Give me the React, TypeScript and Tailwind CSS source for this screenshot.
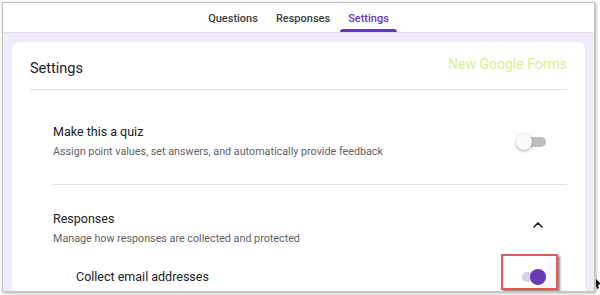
import { ChevronUp } from 'lucide-react';

type TabProps = { label: string; active?: boolean };

function Tab({ label, active }: TabProps) {
  return (
    <div
      className={`relative flex h-full items-center px-[8px] pt-[3px] text-[11px] font-medium ${
        active ? 'text-[#673ab7]' : 'text-[#3c4043]'
      }`}
    >
      {label}
      {active && <div className="absolute bottom-0 left-0 right-0 h-[3px] rounded-t-[3px] bg-[#673ab7]" />}
    </div>
  );
}

function Toggle({ on }: { on?: boolean }) {
  return (
    <div className="relative flex h-[16px] w-[30px] items-center">
      <div className={`ml-[6px] h-[10px] w-[24px] rounded-full ${on ? 'bg-[#d9cdf0]' : 'bg-[#bdbdbd]'}`} />
      <div
        className={`absolute top-0 h-[16px] w-[16px] rounded-full ${
          on ? 'right-0 bg-[#673ab7]' : 'left-0 bg-[#fafafa] shadow-[0_1px_3px_rgba(0,0,0,0.35)]'
        }`}
      />
    </div>
  );
}

export default function App() {
  return (
    <div
      className="relative h-[295px] w-[600px] overflow-hidden bg-white"
      style={{ fontFamily: 'Roboto, "Liberation Sans", sans-serif' }}
    >
      <div className="ml-[2px] mt-[2px] flex h-[290px] w-[593px] flex-col overflow-hidden border border-[#c4c4c4] bg-[#f0ebf8] shadow-[1px_1px_3px_rgba(0,0,0,0.35)]">
        {/* Tabs */}
        <div className="flex h-[30px] shrink-0 justify-center gap-[2px] border-b border-[#e4def0] bg-white">
          <Tab label="Questions" />
          <Tab label="Responses" />
          <Tab label="Settings" active />
        </div>

        {/* Card */}
        <div className="flex-1 px-[9px] pt-[9px]">
          <div className="h-full rounded-t-[8px] bg-white px-[18px]">
            <div className="flex items-start justify-between border-b border-[#e0e0e0] pb-[10px]">
              <div className="mt-[17px] text-[14.5px] leading-[20px] text-[#202124]">Settings</div>
              <div className="mt-[13px] text-[14px] leading-[18px] text-[#d6ef8c]">New Google Forms</div>
            </div>

            <div className="ml-[23px]">
              {/* Quiz */}
              <div className="flex items-center justify-between border-b border-[#e0e0e0] pt-[33px] pb-[24px]">
                <div>
                  <div className="text-[12.5px] leading-[18px] text-[#202124]">Make this a quiz</div>
                  <div className="mt-[3px] text-[10.75px] leading-[16px] text-[#5f6368]">
                    Assign point values, set answers, and automatically provide feedback
                  </div>
                </div>
                <div className="mr-[21px]">
                  <Toggle />
                </div>
              </div>

              {/* Responses */}
              <div className="flex items-start justify-between pt-[25px]">
                <div>
                  <div className="text-[12.5px] leading-[18px] text-[#202124]">Responses</div>
                  <div className="mt-[3px] text-[10.75px] leading-[16px] text-[#5f6368]">
                    Manage how responses are collected and protected
                  </div>
                </div>
                <ChevronUp className="mr-[21px] mt-[7px] h-[16px] w-[16px] text-[#202124]" strokeWidth={2.5} />
              </div>

              <div className="mt-[21px] flex items-center justify-between pl-[23px]">
                <div className="text-[12.5px] leading-[18px] text-[#202124]">Collect email addresses</div>
                <div className="relative mr-[21px]">
                  <Toggle on />
                  <div className="absolute -left-[15px] -top-[15px] h-[36px] w-[57px] border-2 border-[#e8584f] shadow-[2px_2px_2px_rgba(0,0,0,0.45)]" />
                </div>
              </div>
            </div>
          </div>
        </div>
      </div>

      {/* cursor */}
      <svg className="absolute left-[596px] top-[279px]" width="6" height="10" viewBox="0 0 6 10">
        <path d="M0 0 L5 5 L2 6 L3 9 L1 10 L0 7 Z" fill="#111" />
      </svg>
    </div>
  );
}
